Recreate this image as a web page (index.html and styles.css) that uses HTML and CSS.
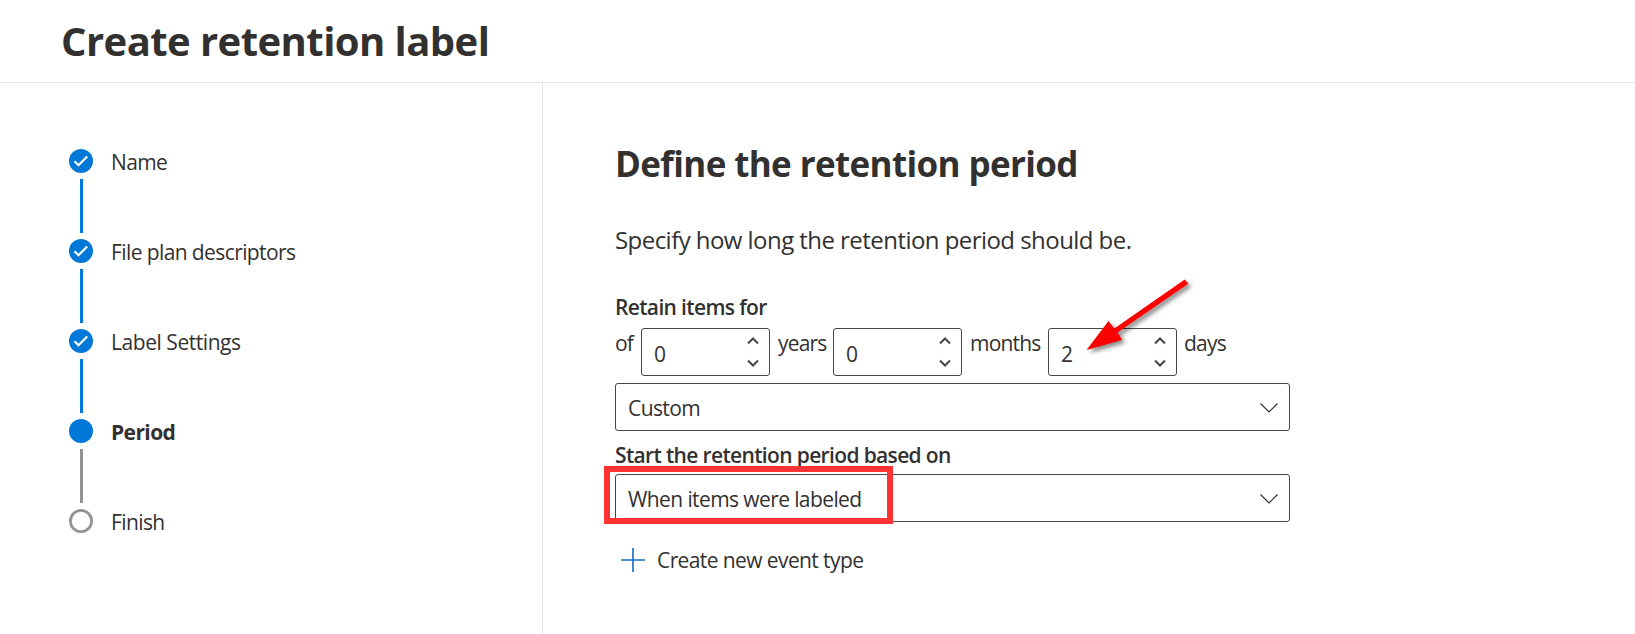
FILE: index.html
```html
<!DOCTYPE html>
<html lang="en">
<head>
  <meta charset="UTF-8">
  <title>Create retention label</title>
  <meta name="viewport" content="width=device-width, initial-scale=1.0">
  <link rel="stylesheet" href="styles.css">
</head>
<body>
  <header class="header">
    <h1 class="title">Create retention label</h1>
  </header>

  <div class="layout">
    <nav class="steps">
      <div class="step done">
        <svg class="dot" viewBox="0 0 24 24"><circle cx="12" cy="12" r="12"/><path d="M5.5 12.2l4 4 8.700-8.700"/></svg>
        <span class="step-name">Name</span>
      </div>
      <div class="line"></div>
      <div class="step done">
        <svg class="dot" viewBox="0 0 24 24"><circle cx="12" cy="12" r="12"/><path d="M5.500 12.200l4 4 8.700-8.700"/></svg>
        <span class="step-name">File plan descriptors</span>
      </div>
      <div class="line"></div>
      <div class="step done">
        <svg class="dot" viewBox="0 0 24 24"><circle cx="12" cy="12" r="12"/><path d="M5.500 12.200l4 4 8.700-8.700"/></svg>
        <span class="step-name settings">Label Settings</span>
      </div>
      <div class="line"></div>
      <div class="step current">
        <svg class="dot" viewBox="0 0 24 24"><circle cx="12" cy="12" r="12"/></svg>
        <span class="step-name">Period</span>
      </div>
      <div class="line todo"></div>
      <div class="step next">
        <svg class="dot" viewBox="0 0 24 24"><circle cx="12" cy="12" r="10.6"/></svg>
        <span class="step-name">Finish</span>
      </div>
    </nav>

    <main class="content">
      <h2 class="heading">Define the retention period</h2>
      <p class="intro">Specify how long the retention period should be.</p>

      <div class="label retain">Retain items for</div>
      <div class="duration">
        <span class="unit of">of</span>
        <div class="spinner">
          <span>0</span>
          <svg class="arrows" viewBox="0 0 12 32"><path d="M1 7.5l5-5 5 5M1 24.5l5 5 5-5"/></svg>
        </div>
        <span class="unit years">years</span>
        <div class="spinner">
          <span>0</span>
          <svg class="arrows" viewBox="0 0 12 32"><path d="M1 7.5l5-5 5 5M1 24.5l5 5 5-5"/></svg>
        </div>
        <span class="unit months">months</span>
        <div class="spinner">
          <span>2</span>
          <svg class="arrows" viewBox="0 0 12 32"><path d="M1 7.5l5-5 5 5M1 24.5l5 5 5-5"/></svg>
          <svg class="pointer" viewBox="0 0 110 80"><path d="M2.5 72L24.5 43l5.8 7.5L100.7 1.5l3.6 4.2-70.6 48.8L38 62z"/></svg>
        </div>
        <span class="unit days">days</span>
      </div>

      <div class="select">
        <span>Custom</span>
        <svg class="chevron" viewBox="0 0 18 10"><path d="M.5.5L9 9 17.5.5"/></svg>
      </div>

      <div class="label start">Start the retention period based on</div>
      <div class="select">
        <span>When items were labeled</span>
        <svg class="chevron" viewBox="0 0 18 10"><path d="M.5.5L9 9 17.5.5"/></svg>
        <div class="highlight"></div>
      </div>

      <div class="create">
        <svg class="plus" viewBox="0 0 24 24"><path d="M12 0v24M0 12h24"/></svg>
        <span>Create new event type</span>
      </div>
    </main>
  </div>
</body>
</html>
```
FILE: styles.css
```css
* {
  box-sizing: border-box;
}

body {
  margin: 0;
  height: 634px;
  overflow: hidden;
  display: flex;
  flex-direction: column;
  background: #fff;
  color: #323130;
  font-family: 'Open Sans', 'Noto Sans', sans-serif;
  font-size: 21px;
  line-height: 28px;
  letter-spacing: -0.6px;
}

svg {
  display: block;
  flex: none;
  fill: none;
}

span {
  white-space: nowrap;
}

.header {
  height: 83px;
  padding: 12px 61px;
  border-bottom: 1px solid #e5e5e5;
}

.title {
  margin: 0;
  font-size: 40px;
  line-height: 58px;
  font-weight: 700;
  letter-spacing: -0.55px;
}

.layout {
  flex: 1;
  display: flex;
}

.steps {
  width: 543px;
  padding: 66px 0 0 69px;
  border-right: 1px solid #e5e5e5;
}

.step {
  height: 24px;
  display: flex;
  align-items: center;
  gap: 18px;
}

.dot {
  width: 24px;
  height: 24px;
}

.dot circle {
  fill: #0078d7;
}

.dot path {
  stroke: #fff;
  stroke-width: 2.2;
}

.next .dot circle {
  fill: none;
  stroke: #949494;
  stroke-width: 2.8;
}

.step-name {
  padding-top: 1px;
}

.settings {
  letter-spacing: -0.45px;
}

.current .step-name {
  font-weight: 700;
}

.line {
  width: 3px;
  height: 54px;
  margin: 6px 0 6px 11px;
  background: #0078d7;
}

.line.todo {
  background: #949494;
}

.content {
  padding: 57px 0 0 72px;
  width: 747px;
}

.heading {
  margin: 0;
  font-size: 35px;
  line-height: 48px;
  font-weight: 700;
  letter-spacing: -0.63px;
  white-space: nowrap;
}

.intro {
  margin: 36px 0 0;
  font-size: 24px;
  line-height: 32px;
  letter-spacing: -0.55px;
}

.label {
  font-weight: 600;
  letter-spacing: -0.65px;
}

.retain {
  margin-top: 37px;
}

.duration {
  display: flex;
  margin-top: 7px;
  height: 48px;
}

.unit {
  padding-top: 1px;
  letter-spacing: -0.8px;
}

.of {
  width: 26px;
}

.years {
  width: 63px;
  padding-left: 8px;
}

.months {
  width: 86px;
  padding-left: 8px;
}

.days {
  padding-left: 7px;
}

.spinner {
  position: relative;
  width: 129px;
  height: 48px;
  padding: 3px 10px 0 12px;
  display: flex;
  align-items: center;
  justify-content: space-between;
  border: 1px solid #484644;
  border-radius: 3px;
}

.arrows {
  width: 12px;
  height: 32px;
  margin-top: -3px;
}

.arrows path {
  stroke: #484644;
  stroke-width: 2;
}

/* red arrow laid over the days field */
.pointer {
  position: absolute;
  left: 35px;
  top: -51px;
  width: 110px;
  height: 80px;
  overflow: visible;
  filter: drop-shadow(3px 3px 2px rgba(0, 0, 0, 0.45));
}

.pointer path {
  fill: #f00;
}

.select {
  position: relative;
  height: 48px;
  margin-top: 7px;
  padding: 1px 11px 0 12px;
  display: flex;
  align-items: center;
  justify-content: space-between;
  border: 1px solid #484644;
  border-radius: 3px;
}

.chevron {
  width: 18px;
  height: 10px;
}

.chevron path {
  stroke: #323130;
  stroke-width: 1.2;
}

.start {
  margin-top: 10px;
  height: 26px;
}

.highlight {
  position: absolute;
  left: -12px;
  top: -9px;
  width: 289px;
  height: 58px;
  border: 6px solid #f33;
}

.create {
  display: flex;
  align-items: center;
  gap: 12px;
  margin-top: 24px;
  padding-left: 6px;
}

.plus {
  width: 24px;
  height: 24px;
}

.plus path {
  stroke: #0f6cbd;
  stroke-width: 1.6;
}
```
